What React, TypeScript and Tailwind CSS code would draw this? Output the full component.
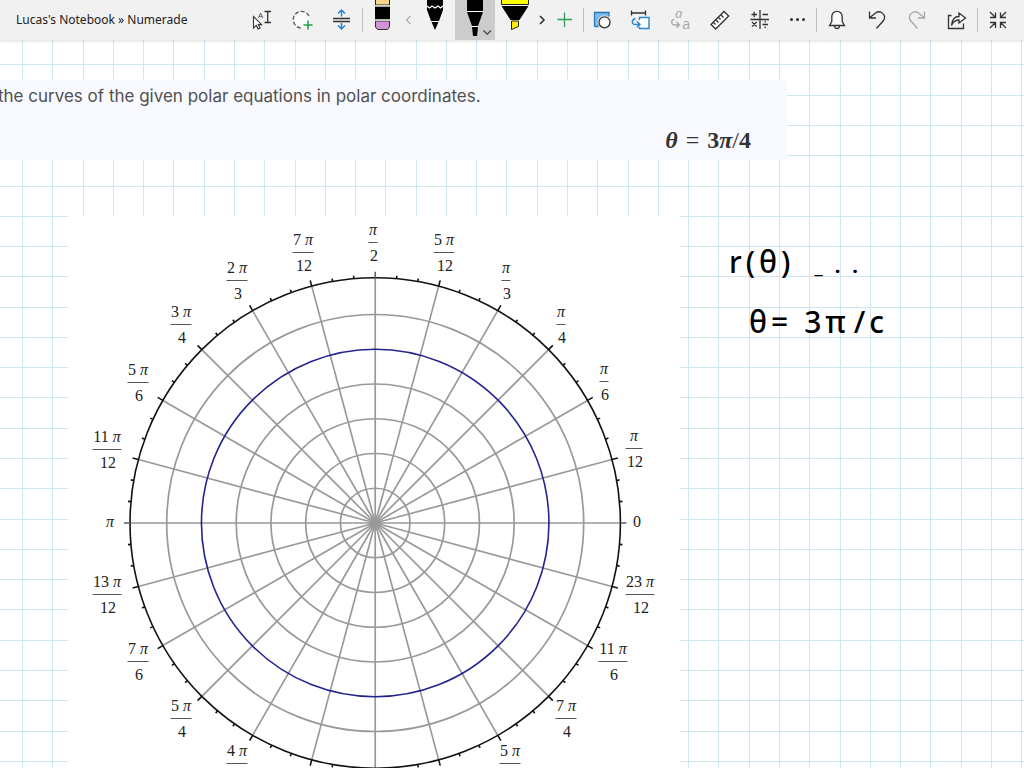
import type { ReactNode } from "react";
import clsx from "clsx";

const GRID_STEP = 30.28;
const GRID_LEFT = 22;
const GRID_TOP = 24.4;

// Centre of the polar plot, in the plot's own coordinates
const CX = 307.2;
const CY = 307;
const OUTER = 245.2;
const RING = 34.75;

interface AngleLabel {
  num: string;
  den?: string;
  x: number;
  y: number;
}

const angleLabels: AngleLabel[] = [
  { num: "π", den: "2", x: 305, y: 26 },
  { num: "5 π", den: "12", x: 376, y: 36 },
  { num: "π", den: "3", x: 438, y: 64 },
  { num: "π", den: "4", x: 493, y: 108 },
  { num: "π", den: "6", x: 536, y: 165 },
  { num: "π", den: "12", x: 566, y: 232 },
  { num: "0", x: 569, y: 311 },
  { num: "23 π", den: "12", x: 572, y: 378 },
  { num: "11 π", den: "6", x: 545, y: 445 },
  { num: "7 π", den: "4", x: 498, y: 502 },
  { num: "5 π", den: "3", x: 442, y: 547 },
  { num: "7 π", den: "12", x: 235, y: 36 },
  { num: "2 π", den: "3", x: 169, y: 64 },
  { num: "3 π", den: "4", x: 113, y: 108 },
  { num: "5 π", den: "6", x: 70, y: 166 },
  { num: "11 π", den: "12", x: 39, y: 233 },
  { num: "π", x: 42, y: 311 },
  { num: "13 π", den: "12", x: 39, y: 378 },
  { num: "7 π", den: "6", x: 70, y: 445 },
  { num: "5 π", den: "4", x: 113, y: 502 },
  { num: "4 π", den: "3", x: 169, y: 547 },
];

function point(radius: number, degrees: number) {
  const a = (degrees * Math.PI) / 180;
  return { x: CX + radius * Math.cos(a), y: CY - radius * Math.sin(a) };
}

function barWidth(label: AngleLabel) {
  if (label.num.length === 4) return 29;
  if (label.num.length === 3) return 21;
  return label.den === "12" ? 17 : 9;
}

interface ToolProps {
  label: string;
  width?: string;
  size?: number;
  active?: boolean;
  children: ReactNode;
}

function Tool({ label, width = "w-10", size = 40, active, children }: ToolProps) {
  return (
    <button
      type="button"
      aria-label={label}
      aria-pressed={active}
      className={clsx("h-10 shrink-0", width, active ? "bg-[#cccccc]" : "hover:bg-[#e2e2e2]")}
    >
      <svg
        width={size}
        height="40"
        viewBox={`0 0 ${size} 40`}
        fill="none"
        stroke="#333333"
        strokeWidth="1.3"
        className="block"
      >
        {children}
      </svg>
    </button>
  );
}

function Separator() {
  return <div className="h-6 w-px shrink-0 bg-[#bdbdbd]" />;
}

function Toolbar() {
  return (
    <div role="toolbar" aria-label="Drawing tools" className="flex shrink-0 items-center">
      <Tool label="Select objects or type text">
        <path d="M11.5 16.5V28l2.8-2.6 1.8 3.6 2-1-1.7-3.4h3.2z" fill="#fff" strokeWidth="1.1" />
        <text x="16" y="18" fontSize="8" fill="#333" stroke="none" fontFamily="Open Sans, sans-serif">
          A
        </text>
        <path d="M22.5 11.5H29M25.7 11.5v11M22.5 22.5H29" />
      </Tool>
      <Tool label="Lasso select">
        <circle cx="19.5" cy="20" r="8.5" fill="#fbfbfb" stroke="none" />
        <path d="M27 16a8.3 8.3 0 1 0-8 12" strokeDasharray="4 2" stroke="#555" />
        <path d="M26 20.5v9M21.5 25h9" stroke="#2ba04b" strokeWidth="1.6" />
      </Tool>
      <Tool label="Insert space">
        <path d="M11 18.5h17M11 21.5h17" />
        <path
          d="M19.5 16.5v-6M16 13.5l3.5-3.5 3.5 3.5M19.5 23v6M16 25.5l3.5 3.5 3.5-3.5"
          stroke="#2786c9"
          strokeWidth="1.5"
        />
      </Tool>
      <Separator />
      <Tool label="Eraser">
        <path d="M12.5-1h14v6h-14z" fill="#f7d58b" stroke="#222" strokeWidth="1" />
        <path d="M12 6.5h15v13H12z" fill="#000" stroke="none" />
        <path d="M12.5 21h14v6l-2 2.5h-10l-2-2.5z" fill="#cf93d6" stroke="#333" strokeWidth="1" />
        <path d="M12.5 5.9h14M12.5 20h14" stroke="#fff" strokeWidth="1" />
      </Tool>
      <Tool label="Previous pens" width="w-3" size={12}>
        <path d="M7.5 16l-4 4 4 4" stroke="#b0b0b0" />
      </Tool>
      <Tool label="Pencil">
        <path d="M12 0h16v10l-4 11h-8l-4-11zM16.5 22h7L20 30z" fill="#000" stroke="none" />
        <path d="M12 6l2.5 2L17 6l3 2 3-2 2.5 2L28 6" stroke="#fff" strokeWidth="1.3" />
      </Tool>
      <Tool label="Pen" active>
        <path d="M12 0h16v12l-5 14h-6l-5-14zM17 27h6l-1 9h-4z" fill="#000" stroke="none" />
        <path d="M12 11.5h16M17 26.5h6" stroke="#fff" strokeWidth="1" />
        <path d="M28.5 30.5l3.7 3.7 3.7-3.7" stroke="#444" />
      </Tool>
      <Tool label="Highlighter">
        <path d="M6.5-1h27v5.5h-27z" fill="#ffff00" stroke="#222" strokeWidth="1" />
        <path d="M6.5 6h27l-9 14h-9z" fill="#000" stroke="none" />
        <path d="M16.5 21h7v5.5l-7 3z" fill="#ffee00" stroke="#222" strokeWidth="1" />
      </Tool>
      <Tool label="More pens" width="w-3.5" size={14}>
        <path d="M5 16l4 4-4 4" strokeWidth="1.6" />
      </Tool>
      <Tool label="Add pen" width="w-[34px]" size={34}>
        <path d="M15.5 12.5V27M8.5 19.5H23" stroke="#2f9e57" />
      </Tool>
      <Separator />
      <Tool label="Shapes" width="w-9" size={36}>
        <path d="M10.5 12.5H25v14H10.5z" fill="#7cbcec" stroke="none" />
        <path d="M10.5 26.5v-14H25v4M10.5 26.5h4" stroke="#2478b8" />
        <circle cx="20.5" cy="22.3" r="6.8" fill="#f2f2f2" stroke="none" />
        <circle cx="20.5" cy="22.3" r="5.5" fill="#fbfbfb" />
      </Tool>
      <Tool label="Ink to shape">
        <path d="M11.5 13h14M11.5 10.5v5M25.5 10.5v5" />
        <path d="M19.5 20v-2.5H29v11h-9.5V27" fill="#fff" stroke="#2487cf" strokeWidth="1.4" />
        <path d="M15.5 18.5c-4 1-4.5 6 0 6H20M17 21.5l3 3-3 3" stroke="#2487cf" strokeWidth="1.4" />
      </Tool>
      <Tool label="Ink to text">
        <g fill="#a8a8a8" stroke="none" fontFamily="Open Sans, sans-serif">
          <text x="15" y="18" fontSize="13" fontStyle="italic">
            a
          </text>
          <text x="22" y="29" fontSize="15">
            a
          </text>
        </g>
        <path d="M14 19c-3.5 2-3 6 1 6h4.5M16.5 22l3 3-3 3" stroke="#a8a8a8" />
      </Tool>
      <Tool label="Ruler">
        <path d="M11 24.5l13-13 4.7 4.5-13 13z" fill="#fbfbfb" />
        <path d="M13.5 22.5l2 2M16 20l2.5 2.5M18.5 17.5l2 2M21 15l2.5 2.5" />
      </Tool>
      <Tool label="Math">
        <path d="M10.5 19.5H29M20 10v19" />
        <path d="M11.5 14.5H17M14.2 11.7v5.5M22.5 14.5H28M12 22l4.600 4.600M16.6 22L12 26.6M22.5 24.5H28M25.2 21v1.5M25.2 26.5V28" />
      </Tool>
      <Tool label="More options" width="w-9" size={36}>
        <g fill="#333" stroke="none">
          <circle cx="11.5" cy="19.5" r="1.5" />
          <circle cx="17.5" cy="19.5" r="1.5" />
          <circle cx="23.5" cy="19.5" r="1.5" />
        </g>
      </Tool>
      <Separator />
      <Tool label="Notifications">
        <path d="M12.5 25.5h15l-2.3-4v-5a5.2 5.2 0 0 0-10.4 0v5z" fill="#fbfbfb" />
        <path d="M17.5 26c.5 3.5 4.5 3.5 5 0" />
      </Tool>
      <Tool label="Undo">
        <path d="M12.5 11.5V18H19M12.5 18l6-5c5-3.5 11.5 2 8 7.5l-7 8" />
      </Tool>
      <Tool label="Redo">
        <path d="M27.5 11.5V18H21M27.5 18l-6-5c-5-3.5-11.5 2-8 7.5l7 8" stroke="#a8a8a8" />
      </Tool>
      <Tool label="Share">
        <path d="M14.5 15.5h-3v13h15v-5" />
        <path d="M14.5 25.5c.5-5.5 3-9 7.5-9V13l6.5 5-6.5 5v-3c-4 0-6 2-7.5 5.500z" fill="#fbfbfb" />
      </Tool>
      <Separator />
      <Tool label="Exit full screen">
        <path d="M12 12l5.5 5.5M17.5 12.5v5H12M28 12l-5.5 5.5M22.5 12.5v5H28M12 28l5.5-5.5M17.5 28v-5.5H12M28 28l-5.5-5.5M22.5 28v-5.5H28" />
      </Tool>
    </div>
  );
}

function GridPaper() {
  const lines = Array.from({ length: 90 }, (_, i) => i);
  return (
    <svg className="absolute inset-0 h-full w-full" stroke="#cfe8ef" aria-hidden="true">
      {lines.map((i) => {
        const x = Math.round(GRID_LEFT + i * GRID_STEP) + 0.5;
        const y = Math.round(GRID_TOP + i * GRID_STEP) + 0.5;
        return (
          <g key={i}>
            <line x1={x} x2={x} y1="0" y2="100%" />
            <line x1="0" x2="100%" y1={y} y2={y} />
          </g>
        );
      })}
    </svg>
  );
}

function PolarPlot() {
  const spokes = Array.from({ length: 24 }, (_, i) => i * 15);
  const ticks = Array.from({ length: 72 }, (_, i) => i * 5);

  return (
    <svg
      width="612"
      height="614"
      viewBox="0 0 612 614"
      fill="none"
      role="img"
      aria-label="Polar coordinate plane"
      className="block"
    >
      {/* Spokes and rings */}
      <g stroke="#999999" strokeWidth="1.7">
        {spokes.map((deg) => {
          const end = point(OUTER, deg);
          return <line key={deg} x1={CX} y1={CY} x2={end.x} y2={end.y} />;
        })}
        {[1, 2, 3, 4, 6].map((n) => (
          <circle key={n} cx={CX} cy={CY} r={n * RING} />
        ))}
      </g>
      <circle cx={CX} cy={CY} r="6" fill="#999999" />
      <circle cx={CX} cy={CY} r={5 * RING} stroke="#24248f" strokeWidth="1.6" />

      {/* Rim with tick marks */}
      <g stroke="#111111" strokeWidth="1.6">
        <circle cx={CX} cy={CY} r={OUTER} />
        {ticks.map((deg) => {
          const major = deg % 15 === 0;
          const start = point(OUTER, deg);
          const end = point(major ? OUTER + 6 : OUTER + 3, deg);
          return (
            <line
              key={deg}
              x1={start.x}
              y1={start.y}
              x2={end.x}
              y2={end.y}
              stroke={deg % 90 === 0 ? "#666666" : undefined}
            />
          );
        })}
      </g>

      {/* Angle labels */}
      <g fill="#222222" fontSize="16" textAnchor="middle" fontFamily="Liberation Serif, serif">
        {angleLabels.map((label) => {
          const coefficient = label.num.replace("π", "");
          const half = barWidth(label) / 2;
          return (
            <g key={`${label.num}/${label.den}`}>
              <text x={label.x} y={label.den ? label.y - 7 : label.y}>
                {coefficient}
                {label.num.includes("π") && <tspan fontStyle="italic">π</tspan>}
              </text>
              {label.den && (
                <>
                  <line
                    x1={label.x - half}
                    x2={label.x + half}
                    y1={label.y + 0.5}
                    y2={label.y + 0.5}
                    stroke="#555555"
                  />
                  <text x={label.x + 1} y={label.y + 19}>
                    {label.den}
                  </text>
                </>
              )}
            </g>
          );
        })}
      </g>
    </svg>
  );
}

export default function App() {
  return (
    <div className="flex h-screen flex-col overflow-hidden bg-white">
      <header className="relative z-10 flex h-10 shrink-0 items-center bg-[#f1f1f1] pr-1.5 shadow-[0_1px_3px_rgba(0,0,0,0.15)]">
        <h1 className="min-w-0 flex-1 truncate pl-4 font-['Noto_Sans',sans-serif] text-[12px] leading-5 text-[#222222]">
          Lucas's Notebook » Numerade
        </h1>
        <Toolbar />
      </header>

      <main className="relative min-h-0 flex-1 overflow-hidden">
        <GridPaper />

        {/* Pasted problem statement */}
        <section className="absolute left-0 top-10 flex h-20 w-[787px] flex-col justify-between bg-[#f9faff] pb-2 pr-9 pt-1">
          <p className="-ml-0.5 whitespace-nowrap font-['Inter',sans-serif] text-[17px] leading-6 text-[#505050]">
            the curves of the given polar equations in polar coordinates.
          </p>
          <p className="flex justify-end gap-2 font-['Liberation_Serif',serif] text-[24px] font-bold leading-6 text-[#333333]">
            <i>θ</i>
            <span className="font-normal">=</span>
            <span>
              3<i>π</i>
              <span className="font-normal">/</span>4
            </span>
          </p>
        </section>

        {/* Pasted plot */}
        <figure className="absolute left-[68px] top-44 bg-white">
          <PolarPlot />
        </figure>

        {/* Handwritten notes */}
        <div className="absolute left-[729px] top-[202px] flex flex-col gap-3 whitespace-nowrap font-['Noto_Sans',sans-serif] text-[30px] font-medium leading-10 text-black">
          <p className="flex gap-1">
            <span>r</span>
            <span>(</span>
            <span>θ</span>
            <span>)</span>
            <span className="flex gap-3 pl-5 text-[20px] font-bold leading-12">
              <span>_</span>
              <span>.</span>
              <span>.</span>
            </span>
          </p>
          <p className="flex pl-5">
            <span>θ</span>
            <span className="pl-1">=</span>
            <span className="pl-4">3</span>
            <span className="pl-1">π</span>
            <span className="pl-2">/</span>
            <span className="pl-1">c</span>
          </p>
        </div>
      </main>
    </div>
  );
}
